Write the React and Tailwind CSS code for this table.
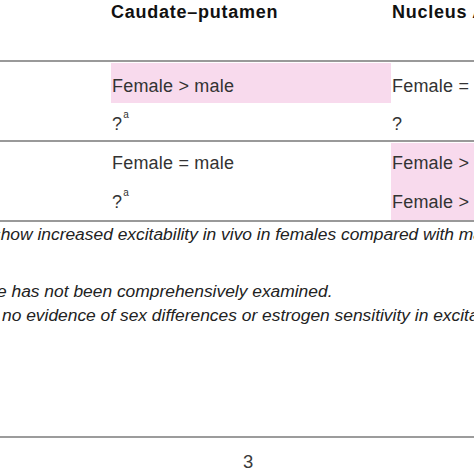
import React from 'react';

const pink = 'bg-[#f8daed]';

const Sup = () => <sup className="text-[10px] align-[7px] ml-[1px]">a</sup>;

const Row = ({ cells, className = '' }) => (
  <div className={`flex ${className}`}>
    <div className="w-[111px] shrink-0" />
    {cells.map((c, i) => (
      <div
        key={i}
        className={`${i === 0 ? 'w-[280px]' : 'w-[200px]'} shrink-0 ${c.pink ? pink : ''} ${c.pad}`}
      >
        <span className="block leading-[24px] pl-[1px]">{c.text}</span>
      </div>
    ))}
  </div>
);

export default function App() {
  return (
    <div
      className="w-[474px] h-[474px] overflow-hidden bg-white text-[#333]"
      style={{ fontFamily: '"Liberation Sans", Arial, sans-serif' }}
    >
      {/* header */}
      <div className="flex h-[60px] text-[18px] font-bold text-[#111] leading-[24px] tracking-[0.75px]">
        <div className="w-[111px] shrink-0" />
        <div className="w-[280px] shrink-0">Caudate–putamen</div>
        <div className="w-[200px] shrink-0 whitespace-nowrap pl-[1px]">Nucleus Accumbens</div>
      </div>
      <div className="h-[2px] bg-[#999]" />

      {/* group 1 */}
      <div className="text-[18px] tracking-[0.2px] pt-[1px]">
        <Row
          cells={[
            { text: 'Female > male', pink: true, pad: 'pt-[11px] pb-[5px]' },
            { text: 'Female = male', pad: 'pt-[11px] pb-[5px] whitespace-nowrap' },
          ]}
        />
        <Row
          cells={[
            { text: <>?<Sup /></>, pad: 'pt-[9px] pb-[4px]' },
            { text: '?', pad: 'pt-[9px] pb-[4px]' },
          ]}
        />
      </div>
      <div className="h-[2px] bg-[#999]" />

      {/* group 2 */}
      <div className="text-[18px] tracking-[0.2px] pt-[1px]">
        <Row
          cells={[
            { text: 'Female = male', pad: 'pt-[8px] pb-[7px]' },
            { text: 'Female > male', pink: true, pad: 'pt-[8px] pb-[7px] whitespace-nowrap' },
          ]}
        />
        <Row
          cells={[
            { text: <>?<Sup /></>, pad: 'pt-[8px] pb-[6px]' },
            { text: 'Female > male', pink: true, pad: 'pt-[8px] pb-[6px] whitespace-nowrap' },
          ]}
        />
      </div>
      <div className="h-[2px] bg-[#999]" />

      {/* footnotes */}
      <div className="italic text-[17.4px] leading-[24px] text-[#222] whitespace-nowrap">
        <p className="ml-[-8px]">show increased excitability in vivo in females compared with males.</p>
        <p className="mt-[33px] ml-[-3px]">e has not been comprehensively examined.</p>
        <p className="ml-[2px]">no evidence of sex differences or estrogen sensitivity in excitability.</p>
      </div>

      <div className="mt-[109px] h-[2px] bg-[#9c9c9c]" />
      <div className="mt-[12px] pl-[243px] text-[18.5px] leading-[24px] text-[#3a3a3a]">3</div>
    </div>
  );
}
